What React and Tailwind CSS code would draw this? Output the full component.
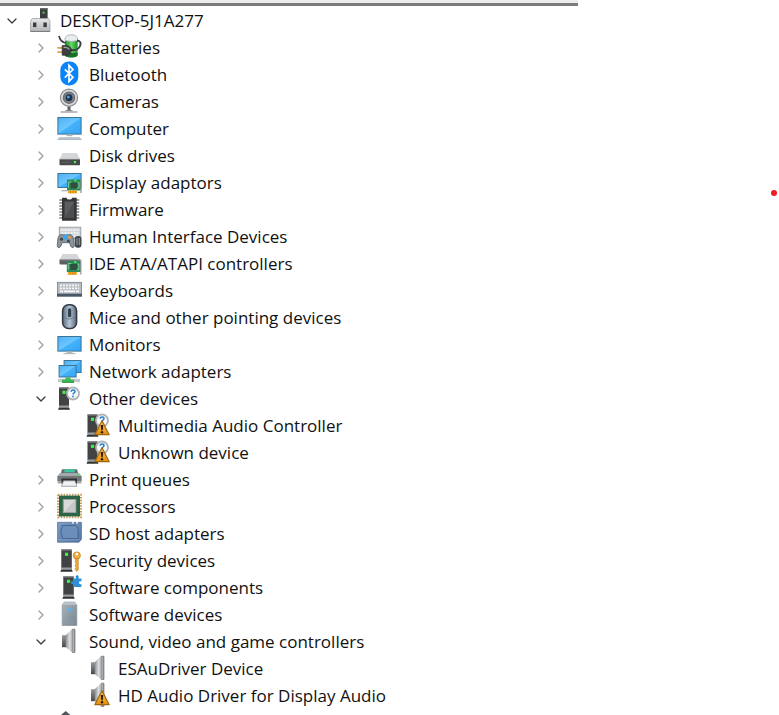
import { useState } from 'react'
import { ChevronDown, ChevronRight } from 'lucide-react'

function IconBox({ children }) {
  return (
    <svg viewBox="0 0 26 26" className="w-[26px] h-[26px] shrink-0" aria-hidden="true">
      {children}
    </svg>
  )
}

// Gradients shared by all the device icons
function Gradients() {
  return (
    <svg className="absolute w-0 h-0" aria-hidden="true">
      <defs>
        <linearGradient id="screen" x1="0" y1="0" x2="1" y2="1">
          <stop offset="0" stopColor="#4bb0f6" />
          <stop offset="0.48" stopColor="#6cc6ff" />
          <stop offset="0.52" stopColor="#45b2fb" />
          <stop offset="1" stopColor="#35a3f5" />
        </linearGradient>
        <linearGradient id="silver" x1="0" y1="0" x2="0" y2="1">
          <stop offset="0" stopColor="#e4e6e8" />
          <stop offset="1" stopColor="#b4b7ba" />
        </linearGradient>
        <linearGradient id="steel" x1="0" y1="0" x2="1" y2="1">
          <stop offset="0" stopColor="#a9b3bc" />
          <stop offset="1" stopColor="#78858f" />
        </linearGradient>
        <linearGradient id="cone" x1="0" y1="0" x2="1" y2="0">
          <stop offset="0" stopColor="#8b8e91" />
          <stop offset="0.5" stopColor="#dcdee0" />
          <stop offset="1" stopColor="#95989b" />
        </linearGradient>
        <linearGradient id="magnet" x1="0" y1="0" x2="0" y2="1">
          <stop offset="0" stopColor="#96999c" />
          <stop offset="1" stopColor="#46494c" />
        </linearGradient>
        <linearGradient id="battery" x1="0" y1="0" x2="1" y2="0">
          <stop offset="0" stopColor="#1f7f2a" />
          <stop offset="0.5" stopColor="#63dd60" />
          <stop offset="1" stopColor="#1d8a2b" />
        </linearGradient>
        <linearGradient id="mouse" x1="0" y1="0" x2="1" y2="0">
          <stop offset="0" stopColor="#5c6c7d" />
          <stop offset="0.5" stopColor="#b7c5d3" />
          <stop offset="1" stopColor="#56667a" />
        </linearGradient>
        <linearGradient id="sdcard" x1="0" y1="0" x2="1" y2="1">
          <stop offset="0" stopColor="#7c9cc4" />
          <stop offset="1" stopColor="#4f74a3" />
        </linearGradient>
        <linearGradient id="warning" x1="0" y1="0" x2="0" y2="1">
          <stop offset="0" stopColor="#ffc450" />
          <stop offset="1" stopColor="#e38f10" />
        </linearGradient>
      </defs>
    </svg>
  )
}

function Screen({ x, y, w, h }) {
  return <rect x={x + 0.5} y={y + 0.5} width={w - 1} height={h - 1} fill="url(#screen)" stroke="#3c7396" />
}

function Tower({ x, y = 2.5, w = 10 }) {
  return (
    <g>
      <rect x={x} y={y} width={w} height="19" fill="#404244" />
      <rect x={x} y={y} width={w} height="1.2" fill="#737678" />
      <rect x={x} y={y + 18} width={w} height="2" fill="#9a9da0" />
      <path d={`M${x} ${y + 20}h${w}l1 2.2h-${w + 2}z`} fill="#303234" />
      <rect x={x + w / 2 - 1.6} y={y + 3.2} width="3.2" height="3.2" fill="#3ff04d" />
    </g>
  )
}

function CircuitCard({ x, y }) {
  return (
    <g>
      <rect x={x} y={y} width="14" height="11" fill="#2c8a58" />
      <path d={`M${x + 1.5} ${y + 8.5}v-6h3M${x + 10.5} ${y + 3}h1.6v5.5h-3`} stroke="#7ccb9d" fill="none" />
      <rect x={x + 4} y={y + 3.5} width="6" height="5" fill="#3d4a43" stroke="#1c5236" strokeWidth="0.7" />
      <rect x={x + 7.5} y={y} width="2" height="2" fill="#46f053" />
      <rect x={x + 1} y={y + 11} width="9" height="2.8" fill="#f3a51d" />
      <path d={`M${x + 3.5} ${y + 11}v2.8M${x + 6} ${y + 11}v2.8M${x + 8.4} ${y + 11}v2.8`} stroke="#c97b0a" strokeWidth="0.6" />
      <path d={`M${x + 14} ${y - 1.5}v15`} stroke="#8c9296" strokeWidth="1.2" />
    </g>
  )
}

function Question({ x, y }) {
  return (
    <g>
      <circle cx={x} cy={y} r="6" fill="#f8fafb" stroke="#b0b4b8" strokeWidth="1.8" />
      <path d={`M${x - 1.8} ${y - 1.8}q0-1.8 1.9-1.8t1.9 1.7q0 1-1.1 1.6-.8.5-.8 1.3`} fill="none" stroke="#2380c8" strokeWidth="1.5" />
      <circle cx={x} cy={y + 3} r="0.9" fill="#2380c8" />
    </g>
  )
}

function Warning() {
  return (
    <g>
      <path d="M17 8.800l7.200 13.900h-14.400z" fill="url(#warning)" stroke="#a0660c" strokeWidth="1.2" strokeLinejoin="round" />
      <path d="M15.800 13h2.400l-.5 5.200h-1.400z" fill="#2a1b05" />
      <circle cx="17" cy="20.200" r="1.200" fill="#2a1b05" />
    </g>
  )
}

function Speaker() {
  return (
    <g>
      <path d="M6 7.200h4v12h-4z" fill="url(#magnet)" />
      <path d="M9.700 7.200L16 1h1.500v23.500H16L9.700 19z" fill="url(#cone)" />
      <path d="M16.300 0.800h2q1.100 0 1.100 1.200v21.800q0 1.200-1.100 1.200h-2z" fill="#85888b" />
      <path d="M17.300 1.500v22.600" stroke="#c9cbcd" strokeWidth="0.7" />
    </g>
  )
}

const icons = {
  root: (
    <>
      <rect x="13" y="1.2" width="7.6" height="10.5" fill="#393b3d" />
      <path d="M13 1.2h7.6v1.2h-7.6z" fill="#696c6e" />
      <rect x="15.6" y="4.6" width="2" height="2" fill="#3fd84d" />
      <path d="M5 11.5h16.5l1.5 3v10h-19.5v-10z" fill="url(#silver)" stroke="#96999c" strokeWidth="0.7" />
      <path d="M3.5 24.4h19.5" stroke="#77797b" />
      <rect x="6" y="15.5" width="3.4" height="4.6" fill="#3c3d3f" />
      <rect x="16.4" y="15.5" width="3.4" height="4.6" fill="#3c3d3f" />
    </>
  ),
  battery: (
    <>
      <path d="M9 4v17q0 2.4 6.3 2.4t6.3-2.4V4z" fill="url(#battery)" />
      <path d="M9 6.5V4q1.5-3.4 6.3-3.4T21.6 4v2.5q-6 2-12.6 0z" fill="#e9edee" stroke="#a3acae" strokeWidth="0.8" />
      <path d="M9 19v2q0 2.4 6.3 2.4t6.3-2.4v-2z" fill="#1b6e28" />
      <path d="M3 2q1 5 6 7" fill="none" stroke="#35393b" strokeWidth="1.6" />
      <path d="M15 16q7 1 9-4t-3-5.500" fill="none" stroke="#3e4345" strokeWidth="2" />
      <path d="M1.400 13.800h5M1.400 18.200h5" stroke="#dca048" strokeWidth="1.800" />
      <path d="M6.200 11.500h3.300q5.500.5 6 4.500-.5 5-6 5.200h-3.300z" fill="#3e3f41" stroke="#292a2b" strokeWidth="0.700" />
      <path d="M7.500 13.400h2q2.800.4 3.800 2" fill="none" stroke="#a4a8ab" strokeWidth="1.400" />
    </>
  ),
  bluetooth: (
    <>
      <rect x="4.300" y="0.400" width="18" height="24" rx="8.500" fill="#0a84f7" />
      <path d="M8.800 8.300l8.200 7.900-4 4.200V4.400l4 4.200-8.200 8" fill="none" stroke="#fff" strokeWidth="1.700" />
    </>
  ),
  camera: (
    <>
      <rect x="11.500" y="18" width="3" height="5.500" fill="#5e6164" />
      <path d="M4.500 24h17" stroke="#b4b6b8" strokeWidth="1.800" />
      <path d="M9.500 22.600h7" stroke="#85888a" />
      <circle cx="13" cy="9.700" r="8.600" fill="#d6d8d9" stroke="#8c8f91" strokeWidth="1.200" />
      <circle cx="13" cy="9.700" r="5.600" fill="#7d8388" stroke="#66696c" strokeWidth="1.200" />
      <circle cx="13" cy="9.700" r="3.400" fill="#1a3148" />
      <circle cx="12.300" cy="9" r="1.500" fill="#4c9be0" />
    </>
  ),
  computer: (
    <>
      <Screen x={1.4} y={2} w={24.2} h={17.6} />
      <path d="M10.500 19.600h6v1.600h-6z" fill="#b3b8bc" />
      <path d="M3.500 22h20l2 2.500h-24z" fill="#c4c9cd" />
      <path d="M1.500 24.300h24" stroke="#8fa5b5" strokeWidth="0.800" />
    </>
  ),
  disk: (
    <>
      <path d="M6.500 11h14.500l3 6.200h-20.500z" fill="#d4d6d7" />
      <rect x="3.500" y="17" width="20.500" height="6.200" rx="0.800" fill="#47494b" />
      <path d="M3.500 17.400h20.500" stroke="#85888a" strokeWidth="0.900" />
      <rect x="17.800" y="19" width="2.200" height="2.200" fill="#3ff04d" />
      <path d="M5.500 20.200h9" stroke="#5f6264" />
    </>
  ),
  display: (
    <>
      <Screen x={1.4} y={4} w={24.2} h={15} />
      <path d="M5.500 21.700h6" stroke="#b3b8bc" strokeWidth="1.400" />
      <CircuitCard x={11} y={10.5} />
    </>
  ),
  firmware: (
    <>
      <path d="M3.300 4h19.900M3.300 7h19.900M3.300 10h19.900M3.300 13h19.900M3.300 16h19.900M3.300 19h19.900M3.300 22h19.900" stroke="#7d8082" strokeWidth="1.700" />
      <path d="M6 1.800h4.500q.3 2.200 2.800 2.200t2.800-2.200h4.600v23h-14.700z" fill="#343637" />
      <path d="M8.600 5.500h9.400v16.500h-9.400z" fill="#5b5d5f" />
      <path d="M8.600 22l9.400-16.500v16.500z" fill="#4c4e50" />
    </>
  ),
  hid: (
    <>
      <rect x="3.300" y="4.200" width="21.500" height="11.500" fill="#d3d6d9" stroke="#969da3" strokeWidth="0.900" />
      <path d="M5.500 7h17M5.500 10h17M5.500 13h17" stroke="#f8f9fa" strokeWidth="1.700" strokeDasharray="2 1" />
      <path d="M2 15q1-3.500 3.500-3.500 2 .5 4 .5t4-.5q3 0 3.800 3.500l1 7.500q-.4 2.500-2.200 2.200-1.500-.6-2.600-5h-7.500q-1 4.500-2.600 5-2 .1-2.200-2z" fill="#8b959e" stroke="#505a63" strokeWidth="0.800" />
      <circle cx="9.500" cy="14" r="2.600" fill="#3ba5ef" />
      <circle cx="13.300" cy="14.500" r="1.400" fill="#f29a3a" />
      <circle cx="5.500" cy="16.200" r="1.600" fill="#43484d" />
      <circle cx="12.500" cy="18" r="1.500" fill="#43484d" />
      <rect x="18.700" y="13" width="6.800" height="11.700" rx="3" fill="#43484d" />
      <path d="M21 15v7M23.300 15v7" stroke="#909ba5" />
    </>
  ),
  ide: (
    <>
      <path d="M6.500 4h14.500l3 5.700h-20.500z" fill="#d4d6d7" />
      <rect x="3.500" y="9.500" width="20.500" height="5" rx="0.800" fill="#5e6163" />
      <path d="M3.500 9.900h20.500" stroke="#96999b" strokeWidth="0.900" />
      <CircuitCard x={10.800} y={11} />
    </>
  ),
  keyboard: (
    <>
      <rect x="1.500" y="5.400" width="24" height="12" fill="#b9bfc4" stroke="#89929a" />
      <path d="M4 8.300h19M4 11.300h19" stroke="#f7f8f9" strokeWidth="1.800" strokeDasharray="2 1" />
      <path d="M4 14.300h3M8 14.300h11M20 14.300h3" stroke="#f7f8f9" strokeWidth="1.800" />
      <rect x="1" y="16.700" width="25" height="3" fill="#4a5866" />
    </>
  ),
  mouse: (
    <>
      <rect x="6.600" y="0.800" width="14" height="23.700" rx="6" fill="url(#mouse)" stroke="#303943" strokeWidth="1.500" />
      <path d="M7 12.500q6.500 5 13 0" fill="none" stroke="#66778a" strokeWidth="0.800" />
      <rect x="12" y="4.200" width="3.200" height="9" rx="1.500" fill="#34404c" />
    </>
  ),
  monitor: (
    <>
      <Screen x={1.4} y={5} w={24.2} h={15.600} />
      <path d="M10.500 20.600h6v1.600h-6z" fill="#b3b8bc" />
      <path d="M7.500 22.700h12" stroke="#a9afb3" />
    </>
  ),
  network: (
    <>
      <Screen x={7.600} y={2} w={18} h={13} />
      <Screen x={2.600} y={7} w={18} h={12.500} />
      <path d="M2 22.500h22" stroke="#c4c8ca" strokeWidth="3.400" />
      <path d="M9.500 19.500h5v2h3.500v3.300h-12v-3.300h3.500z" fill="#3db955" />
      <path d="M6 24.200h12" stroke="#2a943f" />
    </>
  ),
  other: (
    <>
      <Tower x={3} />
      <Question x={17} y={8.500} />
    </>
  ),
  unknown: (
    <>
      <Tower x={2.500} />
      <Question x={17} y={8.500} />
      <Warning />
    </>
  ),
  printer: (
    <>
      <path d="M6 3.300h15l1.500 5h-18z" fill="#676c70" />
      <path d="M8.700 3.300h9.600l.5 3h-10.600z" fill="#39c9a4" />
      <path d="M4 7h19l2.500 3v6.500q0 1-1 1h-22q-1 0-1-1v-6.500z" fill="#a3a8ab" />
      <path d="M1.500 10h24v5h-24z" fill="#737779" />
      <rect x="22.200" y="8" width="2" height="1.600" fill="#3ff04d" />
      <path d="M5.500 12.500h15.500v5h-15.500z" fill="#2d2f31" />
      <path d="M7.500 14.800h11.500l2 5.500h-15.500z" fill="#f0f1f2" stroke="#8d9093" strokeWidth="0.800" />
    </>
  ),
  processor: (
    <>
      <rect x="2" y="1.700" width="23" height="22.600" fill="none" stroke="#c79a54" strokeWidth="2" strokeDasharray="1.500 1.300" />
      <rect x="3" y="2.600" width="21" height="20.800" fill="#2b6447" />
      <rect x="7.300" y="6.500" width="12.500" height="13" fill="#d9dbdb" stroke="#9ca19e" />
      <path d="M8 19l11.300-12v12z" fill="#c5c7c8" />
    </>
  ),
  sdcard: (
    <>
      <path d="M1.500 2.300h14.500v2h2v-2h2v2h2v-2h3.500v17l-2.500 3h-21.500z" fill="url(#sdcard)" stroke="#5a7499" strokeWidth="0.700" />
      <path d="M6 5.500h13.500l2.500 2.500v10.500h-16v-3.500l-1-1v-5l1-1z" fill="#6c8fba" stroke="#45658e" />
      <path d="M2 19.800h21.500" stroke="#8aa6ca" strokeWidth="0.800" />
    </>
  ),
  security: (
    <>
      <Tower x={5.300} w={10.500} />
      <circle cx="20.800" cy="8.500" r="3.600" fill="#f0b04a" stroke="#c17f1d" strokeWidth="0.800" />
      <circle cx="20.800" cy="6.900" r="1.200" fill="#fff" />
      <path d="M19.300 11.700h3v11l-1.500 1.800-1.500-1.800v-1.500l1-1-1-1v-1.500l1-1-1-1z" fill="#eaa53b" stroke="#c17f1d" strokeWidth="0.600" />
    </>
  ),
  component: (
    <>
      <Tower x={7.300} w={10.500} />
      <path d="M17 4.500h3q-1-3.200 1.200-3.200t1.200 3.200h3v3q-2.400-.8-2.400 1.200t2.400 1.200v3h-8.400v-3q-2 .6-2-1.200t2-1.200z" fill="#2f8fd5" />
    </>
  ),
  softdev: (
    <>
      <path d="M8.500 1h10l2.300 3v20.500h-14.600v-20.500z" fill="url(#steel)" stroke="#89949d" strokeWidth="0.700" />
      <path d="M8.500 1h10l2.300 3h-14.600z" fill="#b9c0c6" />
      <path d="M8 20.500h11M8 22.700h11" stroke="#8f9ba4" strokeWidth="0.800" />
      <path d="M13.500 6.500l2.200 2.200-2.200 2.300-2.200-2.300z" fill="#4fb7f5" />
    </>
  ),
  speaker: <Speaker />,
  speakerWarning: (
    <>
      <Speaker />
      <Warning />
    </>
  ),
  storage: <path d="M9.700 2l9.500 8-9.500 7-9.500-7z" fill="#55585a" />,
}

const devices = [
  { name: 'Batteries', icon: 'battery' },
  { name: 'Bluetooth', icon: 'bluetooth' },
  { name: 'Cameras', icon: 'camera' },
  { name: 'Computer', icon: 'computer' },
  { name: 'Disk drives', icon: 'disk' },
  { name: 'Display adaptors', icon: 'display' },
  { name: 'Firmware', icon: 'firmware' },
  { name: 'Human Interface Devices', icon: 'hid' },
  { name: 'IDE ATA/ATAPI controllers', icon: 'ide' },
  { name: 'Keyboards', icon: 'keyboard' },
  { name: 'Mice and other pointing devices', icon: 'mouse' },
  { name: 'Monitors', icon: 'monitor' },
  { name: 'Network adapters', icon: 'network' },
  {
    name: 'Other devices',
    icon: 'other',
    children: [
      { name: 'Multimedia Audio Controller', icon: 'unknown' },
      { name: 'Unknown device', icon: 'unknown' },
    ],
  },
  { name: 'Print queues', icon: 'printer' },
  { name: 'Processors', icon: 'processor' },
  { name: 'SD host adapters', icon: 'sdcard' },
  { name: 'Security devices', icon: 'security' },
  { name: 'Software components', icon: 'component' },
  { name: 'Software devices', icon: 'softdev' },
  {
    name: 'Sound, video and game controllers',
    icon: 'speaker',
    children: [
      { name: 'ESAuDriver Device', icon: 'speaker' },
      { name: 'HD Audio Driver for Display Audio', icon: 'speakerWarning' },
    ],
  },
]

function TreeItem({ node, level = 0 }) {
  const [open, setOpen] = useState(Boolean(node.children))

  return (
    <li>
      <div className="flex items-start h-[27px]">
        {level === 2 ? (
          <span className="w-6 shrink-0" />
        ) : (
          <button
            type="button"
            aria-label={node.name}
            aria-expanded={open}
            onClick={() => setOpen(!open)}
            className="flex items-center justify-center w-6 h-[27px] shrink-0"
          >
            {open ? (
              <ChevronDown className="w-4 h-4 text-[#404040]" strokeWidth={2} />
            ) : (
              <ChevronRight className="w-4 h-4 text-[#a0a0a0]" strokeWidth={2} />
            )}
          </button>
        )}
        <span className="flex items-start gap-[7px] pl-[3px]">
          <IconBox>{icons[node.icon]}</IconBox>
          <span className="leading-[27px] whitespace-nowrap">{node.name}</span>
        </span>
      </div>
      {open && node.children && (
        <ul className="pl-[29px]">
          {node.children.map((child) => (
            <TreeItem key={child.name} node={child} level={level + 1} />
          ))}
        </ul>
      )}
    </li>
  )
}

export default function App() {
  return (
    <main className="relative h-screen overflow-hidden bg-white font-['Open_Sans',sans-serif] text-[17px] text-[#111111]">
      <Gradients />
      <div className="w-[74.2%] h-1.5 bg-[#ececec] border-b-3 border-[#7b7b7b]" />
      <ul className="pt-px">
        <TreeItem node={{ name: 'DESKTOP-5J1A277', icon: 'root', children: devices }} />
        {/* Next category, cut off by the window edge */}
        <li className="pl-14">
          <IconBox>{icons.storage}</IconBox>
        </li>
      </ul>
      <span className="absolute right-0.5 top-[190px] w-1.5 h-1.5 rounded-full bg-[#ed1c24]" />
    </main>
  )
}
